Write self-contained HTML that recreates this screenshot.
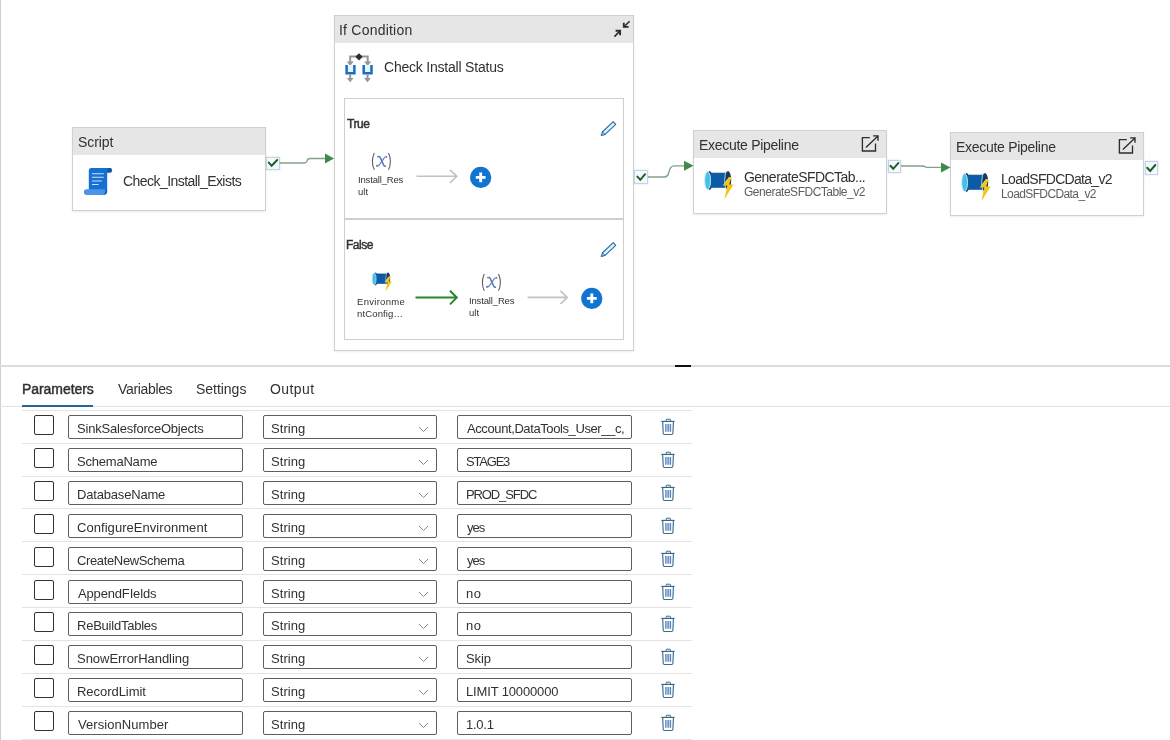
<!DOCTYPE html>
<html><head><meta charset="utf-8">
<style>
html,body{margin:0;padding:0;background:#fff;}
body{width:1170px;height:740px;position:relative;overflow:hidden;font-family:"Liberation Sans",sans-serif;color:#323130;}
.t{position:absolute;white-space:nowrap;will-change:transform;font-family:"Liberation Sans",sans-serif;}
.abs{position:absolute;}
.node{position:absolute;background:#fff;border:1px solid #d0d0d0;box-shadow:0 1px 2px rgba(0,0,0,0.08);box-sizing:border-box;}
.hdr{position:absolute;left:0;top:0;right:0;background:#e6e6e6;}
.chk{position:absolute;width:13.5px;height:13.5px;box-sizing:border-box;border:1px solid #c5d3e2;background:#f4f9fd;box-shadow:0 0 2px rgba(120,170,220,0.35);}
.sep{position:absolute;left:22px;width:670px;height:1px;background:#e3e3e3;}
.cb{position:absolute;left:34px;width:20px;height:20px;box-sizing:border-box;border:1px solid #323130;border-radius:2px;}
.inp{position:absolute;height:24px;box-sizing:border-box;border:1px solid #605e5c;border-radius:2px;}
.chev,.trash{position:absolute;}
svg{overflow:visible;}
</style></head><body>
<!-- left border -->
<div class="abs" style="left:0;top:0;width:1px;height:740px;background:#cfcfcf"></div>

<!-- Script node -->
<div class="node" style="left:72px;top:127px;width:194px;height:84px">
  <div class="hdr" style="height:27px"></div>
</div>
<svg class="abs" style="left:80px;top:163px" width="36" height="36" viewBox="0 0 36 36">
  <path d="M25.5 4.9 H30.3 Q32.1 4.9 32.1 7.3 Q32.1 9.7 30.3 9.7 H25.5 Z" fill="#0b5aa6"/>
  <path d="M11.3 4.9 H28.2 Q27.2 5.2 27.2 8 V28.6 Q27.2 31.6 24.4 31.6 H8.8 V7.6 Q8.8 4.9 11.3 4.9 Z" fill="#1570d2"/>
  <path d="M6.3 26.3 H26.2 V28.8 Q26.2 31.9 23.3 31.9 H6.3 Q3.9 31.9 3.9 29.1 Q3.9 26.3 6.3 26.3 Z" fill="#4b93e6"/>
  <path d="M23.5 31.9 Q26.5 31.9 27 28.6 V26.3 H25.2 V28.8 Q25.2 31 23 31.9 Z" fill="#0d5fb6"/>
  <path d="M11.9 10.7 H23.8 M11.9 14.3 H23.8 M11.9 18 H21.9 M11.9 21.4 H18.7" stroke="#c9e1fa" stroke-width="1.05"/>
</svg>
<div class="chk" style="left:266px;top:156.5px"></div>
<svg class="abs" style="left:0;top:0" width="1170" height="365">
  <!-- connectors -->
  <g fill="none" stroke="#84a088" stroke-width="1.3">
    <path d="M279.5 163 H304 Q306.5 163 307 161 Q307.5 158.5 310 158.5 H326"/>
    <path d="M647.8 177 H664 Q668 177 669 172 Q670 165.8 674.5 165.8 H685"/>
    <path d="M900 166 H922.5 Q924.5 166 925 166.8 Q925.5 167.3 927.5 167.3 H942"/>
  </g>
  <g fill="#3f8a4b">
    <path d="M325 153.6 L334 158.5 L325 163.6 Z"/>
    <path d="M684 160.8 L693.5 165.8 L684 170.8 Z"/>
    <path d="M941 162.4 L950.5 167.4 L941 172.4 Z"/>
  </g>
</svg>

<!-- If Condition node -->
<div class="node" style="left:334px;top:15px;width:300px;height:336px">
  <div class="hdr" style="height:26.5px"></div>
</div>
<svg class="abs" style="left:340px;top:50px" width="38" height="36" viewBox="0 0 38 36">
  <path d="M10.2 12.5 V6.4 H27.7 V12.5" fill="none" stroke="#959595" stroke-width="2"/>
  <path d="M6.6 11.6 L10.2 15.8 L13.8 11.6 Z M24.1 11.6 L27.7 15.8 L31.3 11.6 Z" fill="#959595"/>
  <path d="M19 3.2 L22.7 6.8 L19 10.5 L15.3 6.8 Z" fill="#2d2d2d"/>
  <rect x="6.8" y="15.5" width="7.4" height="7.5" fill="#e3f6fd"/>
  <rect x="24" y="15.5" width="7.4" height="7.5" fill="#e3f6fd"/>
  <path d="M6.6 15.1 V23.3 H14.4 V15.1" fill="none" stroke="#1a6dbf" stroke-width="2.5"/>
  <path d="M23.7 15.1 V23.3 H31.5 V15.1" fill="none" stroke="#1a6dbf" stroke-width="2.5"/>
  <path d="M10.2 24.5 V29 M27.5 24.5 V29" stroke="#959595" stroke-width="2"/>
  <path d="M6.8 28 L10.2 32.2 L13.6 28 Z M24.1 28 L27.5 32.2 L30.9 28 Z" fill="#959595"/>
</svg>
<!-- collapse icon -->
<svg class="abs" style="left:610px;top:17px" width="24" height="24" viewBox="0 0 24 24">
  <g fill="none" stroke="#2b2b2b" stroke-linecap="butt">
    <path d="M4.4 19.6 L10.1 13.9" stroke-width="1.5"/>
    <path d="M5.6 13.8 H10.1 V18.2" stroke-width="1.9"/>
    <path d="M19.6 4.3 L13.9 10" stroke-width="1.5"/>
    <path d="M13.8 5.7 V9.9 H18.6" stroke-width="1.9"/>
  </g>
</svg>
<!-- True/False boxes -->
<div class="abs" style="left:344px;top:98px;width:280px;height:121px;box-sizing:border-box;border:1px solid #cfcfcf;border-bottom:none"></div>
<div class="abs" style="left:344px;top:218px;width:280px;height:122px;box-sizing:border-box;border:1px solid #cfcfcf;border-top:2px solid #cfcfcf"></div>
<!-- pencils -->
<svg class="abs" style="left:596px;top:116px" width="24" height="24" viewBox="0 0 24 24"><path d="M17.26 5.69 L19.74 8.31 L9.04 18.41 L5.3 19.5 L6.56 15.79 Z" fill="#dff3fc" stroke="#2b6ca8" stroke-width="1.15" stroke-linejoin="round"/><path d="M6.6 15.8 L9 18.4" stroke="#2b6ca8" stroke-width="0.9"/></svg>
<svg class="abs" style="left:596px;top:237px" width="24" height="24" viewBox="0 0 24 24"><path d="M17.26 5.69 L19.74 8.31 L9.04 18.41 L5.3 19.5 L6.56 15.79 Z" fill="#dff3fc" stroke="#2b6ca8" stroke-width="1.15" stroke-linejoin="round"/><path d="M6.6 15.8 L9 18.4" stroke="#2b6ca8" stroke-width="0.9"/></svg>
<!-- (x) icons -->
<svg class="abs" style="left:366px;top:148px" width="30" height="26" viewBox="0 0 30 26"><path d="M8.3 5 Q4.4 13.4 8.3 21.8" fill="none" stroke="#5a5a5a" stroke-width="1.05"/><path d="M22.5 5 Q26.4 13.4 22.5 21.8" fill="none" stroke="#5a5a5a" stroke-width="1.05"/><path d="M11.2 8.9 Q13.2 7.7 14.3 9.6 L17.7 17.1 Q18.5 18.7 20 18" fill="none" stroke="#5b7cbd" stroke-width="1.55"/><path d="M21 8.7 Q19.6 8.1 18.2 9.9 L13.5 16.6 Q12.4 18.2 10.7 18.1" fill="none" stroke="#5b7cbd" stroke-width="1.05"/><circle cx="11" cy="17.7" r="0.95" fill="#5b7cbd"/><circle cx="20.5" cy="9" r="0.85" fill="#5b7cbd"/></svg>
<svg class="abs" style="left:476.2px;top:269.3px" width="30" height="26" viewBox="0 0 30 26"><path d="M8.3 5 Q4.4 13.4 8.3 21.8" fill="none" stroke="#5a5a5a" stroke-width="1.05"/><path d="M22.5 5 Q26.4 13.4 22.5 21.8" fill="none" stroke="#5a5a5a" stroke-width="1.05"/><path d="M11.2 8.9 Q13.2 7.7 14.3 9.6 L17.7 17.1 Q18.5 18.7 20 18" fill="none" stroke="#5b7cbd" stroke-width="1.55"/><path d="M21 8.7 Q19.6 8.1 18.2 9.9 L13.5 16.6 Q12.4 18.2 10.7 18.1" fill="none" stroke="#5b7cbd" stroke-width="1.05"/><circle cx="11" cy="17.7" r="0.95" fill="#5b7cbd"/><circle cx="20.5" cy="9" r="0.85" fill="#5b7cbd"/></svg>
<!-- arrows inside if -->
<svg class="abs" style="left:0;top:0" width="700" height="365">
  <g fill="none" stroke="#c2c2c2" stroke-width="1.6">
    <path d="M416.5 176.3 H457 M450 169.8 L456.8 176.3 L450 182.8"/>
    <path d="M527.5 297.4 H567.5 M560.5 290.9 L567.3 297.4 L560.5 303.9"/>
  </g>
  <g fill="none" stroke="#2a862a" stroke-width="2">
    <path d="M415.5 297.6 H457 M450 290.8 L456.8 297.6 L450 304.4"/>
  </g>
  <circle cx="480.7" cy="177.4" r="10.6" fill="#1174d0"/>
  <path d="M480.7 172.5 V182.3 M475.8 177.4 H485.6" stroke="#fff" stroke-width="2.9"/>
  <circle cx="591.8" cy="298.4" r="10.6" fill="#1174d0"/>
  <path d="M591.8 293.5 V303.3 M586.9 298.4 H596.7" stroke="#fff" stroke-width="2.9"/>
</svg>
<!-- small pipeline icon in False -->
<svg class="abs" style="left:368.7px;top:269.2px" width="27.2" height="24.5" viewBox="0 0 40 36"><ellipse cx="9.6" cy="14.5" rx="3" ry="9.4" fill="#173a63"/>
<path d="M9 7.2 H27 V21.8 H9 Z" fill="#0d5aa6"/>
<path d="M9 7.2 H27" stroke="#0a3f7a" stroke-width="0.8"/>
<ellipse cx="28" cy="14.3" rx="3.2" ry="9.3" fill="#183a62"/>
<path d="M25.7 5.1 Q23.6 14.3 25.7 23.4" fill="none" stroke="#a6e2f6" stroke-width="0.9"/>
<ellipse cx="7.6" cy="14.5" rx="2.9" ry="9" fill="#45bfe3" stroke="#c4effc" stroke-width="0.9"/>
<path d="M29.4 11 L22.6 19.6 H27.3 L24.3 33.6 L33.6 18.4 H29.2 L31.6 11 Z" fill="#f4c514"/>
<path d="M29.4 11 L24.5 17.5" stroke="#ffe47a" stroke-width="0.8"/></svg>

<!-- Execute Pipeline 1 -->
<div class="node" style="left:693px;top:130px;width:194px;height:84px">
  <div class="hdr" style="height:26.5px"></div>
</div>
<svg class="abs" style="left:700px;top:166px" width="40" height="36" viewBox="0 0 40 36"><ellipse cx="9.6" cy="14.5" rx="3" ry="9.4" fill="#173a63"/>
<path d="M9 7.2 H27 V21.8 H9 Z" fill="#0d5aa6"/>
<path d="M9 7.2 H27" stroke="#0a3f7a" stroke-width="0.8"/>
<ellipse cx="28" cy="14.3" rx="3.2" ry="9.3" fill="#183a62"/>
<path d="M25.7 5.1 Q23.6 14.3 25.7 23.4" fill="none" stroke="#a6e2f6" stroke-width="0.9"/>
<ellipse cx="7.6" cy="14.5" rx="2.9" ry="9" fill="#45bfe3" stroke="#c4effc" stroke-width="0.9"/>
<path d="M29.4 11 L22.6 19.6 H27.3 L24.3 33.6 L33.6 18.4 H29.2 L31.6 11 Z" fill="#f4c514"/>
<path d="M29.4 11 L24.5 17.5" stroke="#ffe47a" stroke-width="0.8"/></svg>
<svg class="abs" style="left:855px;top:130px" width="30" height="30" viewBox="0 0 30 30"><g fill="none" stroke="#2d2d2d" stroke-width="1.35"><path d="M14.8 7.6 H7.4 V21 H20.5 V13.6"/><path d="M10.9 17.6 L23 5.9 M18.1 5.9 H23 V10.8"/></g></svg>
<div class="chk" style="left:887.5px;top:159.5px"></div>

<!-- Execute Pipeline 2 -->
<div class="node" style="left:950px;top:132px;width:194px;height:84px">
  <div class="hdr" style="height:27px"></div>
</div>
<svg class="abs" style="left:957px;top:168px" width="40" height="36" viewBox="0 0 40 36"><ellipse cx="9.6" cy="14.5" rx="3" ry="9.4" fill="#173a63"/>
<path d="M9 7.2 H27 V21.8 H9 Z" fill="#0d5aa6"/>
<path d="M9 7.2 H27" stroke="#0a3f7a" stroke-width="0.8"/>
<ellipse cx="28" cy="14.3" rx="3.2" ry="9.3" fill="#183a62"/>
<path d="M25.7 5.1 Q23.6 14.3 25.7 23.4" fill="none" stroke="#a6e2f6" stroke-width="0.9"/>
<ellipse cx="7.6" cy="14.5" rx="2.9" ry="9" fill="#45bfe3" stroke="#c4effc" stroke-width="0.9"/>
<path d="M29.4 11 L22.6 19.6 H27.3 L24.3 33.6 L33.6 18.4 H29.2 L31.6 11 Z" fill="#f4c514"/>
<path d="M29.4 11 L24.5 17.5" stroke="#ffe47a" stroke-width="0.8"/></svg>
<svg class="abs" style="left:1112px;top:132px" width="30" height="30" viewBox="0 0 30 30"><g fill="none" stroke="#2d2d2d" stroke-width="1.35"><path d="M14.8 7.6 H7.4 V21 H20.5 V13.6"/><path d="M10.9 17.6 L23 5.9 M18.1 5.9 H23 V10.8"/></g></svg>
<div class="chk" style="left:1144.5px;top:161px"></div>
<div class="chk" style="left:634px;top:170.2px"></div>

<svg class="abs" style="left:0;top:0" width="1170" height="365">
  <!-- check marks -->
  <g fill="none" stroke="#1f5e27" stroke-width="2" stroke-linecap="round" stroke-linejoin="miter">
    <path d="M268.8 162.6 L271.6 165.8 L277.2 160"/>
    <path d="M637.4 176.6 L640.3 179.8 L645.1 174.2"/>
    <path d="M890.4 165.8 L893.2 168.8 L898.3 163.1"/>
    <path d="M1147.2 167.8 L1150.2 171 L1155.3 165"/>
  </g>
</svg>
<!-- bottom panel -->
<div class="abs" style="left:0;top:365px;width:1170px;height:2px;background:#dcdcdc"></div>
<div class="abs" style="left:675px;top:365px;width:16px;height:2px;background:#111"></div>
<div class="abs" style="left:0;top:406px;width:1170px;height:1px;background:#e1e1e1"></div>
<div class="abs" style="left:22px;top:405px;width:71px;height:2px;background:#25679b"></div>
<div class="abs" style="left:22px;top:410px;width:670px;height:1px;background:#e3e3e3"></div>
<div class='sep' style='top:443px'></div>
<div class='cb' style='top:415px'></div>
<div class='inp' style='left:68px;top:415px;width:175px'></div>
<div class='inp' style='left:263px;top:415px;width:174px'></div>
<svg class='chev' style='left:418px;top:426px' width='11' height='7' viewBox='0 0 11 7'><path d='M1 1 L5.5 5.5 L10 1' fill='none' stroke='#8a8886' stroke-width='1'/></svg>
<div class='inp' style='left:457px;top:415px;width:175px'></div>
<svg class='trash' style='left:656px;top:414px' width='24' height='26' viewBox='0 0 24 26'><path d='M10.2 6.9 V5.8 Q10.2 5.2 10.8 5.2 H13.9 Q14.5 5.2 14.5 5.8 V6.9' fill='#dff4fb' stroke='#2f5f80' stroke-width='0.9'/><path d='M5.3 7.4 H18.6' stroke='#2f5f80' stroke-width='1.1'/><path d='M6.7 7.9 L7.2 19.2 Q7.3 20.5 8.6 20.5 H15.5 Q16.8 20.5 16.9 19.2 L17.4 7.9' fill='none' stroke='#3d6b8c' stroke-width='1.15'/><rect x='9.3' y='10' width='5.8' height='7.7' fill='#b3d6f6'/><path d='M9.8 10 V17.7 M12.2 10 V17.7 M14.6 10 V17.7' stroke='#5673a6' stroke-width='0.95'/></svg>
<div class='sep' style='top:476px'></div>
<div class='cb' style='top:448px'></div>
<div class='inp' style='left:68px;top:448px;width:175px'></div>
<div class='inp' style='left:263px;top:448px;width:174px'></div>
<svg class='chev' style='left:418px;top:459px' width='11' height='7' viewBox='0 0 11 7'><path d='M1 1 L5.5 5.5 L10 1' fill='none' stroke='#8a8886' stroke-width='1'/></svg>
<div class='inp' style='left:457px;top:448px;width:175px'></div>
<svg class='trash' style='left:656px;top:447px' width='24' height='26' viewBox='0 0 24 26'><path d='M10.2 6.9 V5.8 Q10.2 5.2 10.8 5.2 H13.9 Q14.5 5.2 14.5 5.8 V6.9' fill='#dff4fb' stroke='#2f5f80' stroke-width='0.9'/><path d='M5.3 7.4 H18.6' stroke='#2f5f80' stroke-width='1.1'/><path d='M6.7 7.9 L7.2 19.2 Q7.3 20.5 8.6 20.5 H15.5 Q16.8 20.5 16.9 19.2 L17.4 7.9' fill='none' stroke='#3d6b8c' stroke-width='1.15'/><rect x='9.3' y='10' width='5.8' height='7.7' fill='#b3d6f6'/><path d='M9.8 10 V17.7 M12.2 10 V17.7 M14.6 10 V17.7' stroke='#5673a6' stroke-width='0.95'/></svg>
<div class='sep' style='top:508px'></div>
<div class='cb' style='top:481px'></div>
<div class='inp' style='left:68px;top:481px;width:175px'></div>
<div class='inp' style='left:263px;top:481px;width:174px'></div>
<svg class='chev' style='left:418px;top:492px' width='11' height='7' viewBox='0 0 11 7'><path d='M1 1 L5.5 5.5 L10 1' fill='none' stroke='#8a8886' stroke-width='1'/></svg>
<div class='inp' style='left:457px;top:481px;width:175px'></div>
<svg class='trash' style='left:656px;top:480px' width='24' height='26' viewBox='0 0 24 26'><path d='M10.2 6.9 V5.8 Q10.2 5.2 10.8 5.2 H13.9 Q14.5 5.2 14.5 5.8 V6.9' fill='#dff4fb' stroke='#2f5f80' stroke-width='0.9'/><path d='M5.3 7.4 H18.6' stroke='#2f5f80' stroke-width='1.1'/><path d='M6.7 7.9 L7.2 19.2 Q7.3 20.5 8.6 20.5 H15.5 Q16.8 20.5 16.9 19.2 L17.4 7.9' fill='none' stroke='#3d6b8c' stroke-width='1.15'/><rect x='9.3' y='10' width='5.8' height='7.7' fill='#b3d6f6'/><path d='M9.8 10 V17.7 M12.2 10 V17.7 M14.6 10 V17.7' stroke='#5673a6' stroke-width='0.95'/></svg>
<div class='sep' style='top:541px'></div>
<div class='cb' style='top:514px'></div>
<div class='inp' style='left:68px;top:514px;width:175px'></div>
<div class='inp' style='left:263px;top:514px;width:174px'></div>
<svg class='chev' style='left:418px;top:525px' width='11' height='7' viewBox='0 0 11 7'><path d='M1 1 L5.5 5.5 L10 1' fill='none' stroke='#8a8886' stroke-width='1'/></svg>
<div class='inp' style='left:457px;top:514px;width:175px'></div>
<svg class='trash' style='left:656px;top:513px' width='24' height='26' viewBox='0 0 24 26'><path d='M10.2 6.9 V5.8 Q10.2 5.2 10.8 5.2 H13.9 Q14.5 5.2 14.5 5.8 V6.9' fill='#dff4fb' stroke='#2f5f80' stroke-width='0.9'/><path d='M5.3 7.4 H18.6' stroke='#2f5f80' stroke-width='1.1'/><path d='M6.7 7.9 L7.2 19.2 Q7.3 20.5 8.6 20.5 H15.5 Q16.8 20.5 16.9 19.2 L17.4 7.9' fill='none' stroke='#3d6b8c' stroke-width='1.15'/><rect x='9.3' y='10' width='5.8' height='7.7' fill='#b3d6f6'/><path d='M9.8 10 V17.7 M12.2 10 V17.7 M14.6 10 V17.7' stroke='#5673a6' stroke-width='0.95'/></svg>
<div class='sep' style='top:574px'></div>
<div class='cb' style='top:547px'></div>
<div class='inp' style='left:68px;top:547px;width:175px'></div>
<div class='inp' style='left:263px;top:547px;width:174px'></div>
<svg class='chev' style='left:418px;top:558px' width='11' height='7' viewBox='0 0 11 7'><path d='M1 1 L5.5 5.5 L10 1' fill='none' stroke='#8a8886' stroke-width='1'/></svg>
<div class='inp' style='left:457px;top:547px;width:175px'></div>
<svg class='trash' style='left:656px;top:546px' width='24' height='26' viewBox='0 0 24 26'><path d='M10.2 6.9 V5.8 Q10.2 5.2 10.8 5.2 H13.9 Q14.5 5.2 14.5 5.8 V6.9' fill='#dff4fb' stroke='#2f5f80' stroke-width='0.9'/><path d='M5.3 7.4 H18.6' stroke='#2f5f80' stroke-width='1.1'/><path d='M6.7 7.9 L7.2 19.2 Q7.3 20.5 8.6 20.5 H15.5 Q16.8 20.5 16.9 19.2 L17.4 7.9' fill='none' stroke='#3d6b8c' stroke-width='1.15'/><rect x='9.3' y='10' width='5.8' height='7.7' fill='#b3d6f6'/><path d='M9.8 10 V17.7 M12.2 10 V17.7 M14.6 10 V17.7' stroke='#5673a6' stroke-width='0.95'/></svg>
<div class='sep' style='top:607px'></div>
<div class='cb' style='top:580px'></div>
<div class='inp' style='left:68px;top:580px;width:175px'></div>
<div class='inp' style='left:263px;top:580px;width:174px'></div>
<svg class='chev' style='left:418px;top:591px' width='11' height='7' viewBox='0 0 11 7'><path d='M1 1 L5.5 5.5 L10 1' fill='none' stroke='#8a8886' stroke-width='1'/></svg>
<div class='inp' style='left:457px;top:580px;width:175px'></div>
<svg class='trash' style='left:656px;top:579px' width='24' height='26' viewBox='0 0 24 26'><path d='M10.2 6.9 V5.8 Q10.2 5.2 10.8 5.2 H13.9 Q14.5 5.2 14.5 5.8 V6.9' fill='#dff4fb' stroke='#2f5f80' stroke-width='0.9'/><path d='M5.3 7.4 H18.6' stroke='#2f5f80' stroke-width='1.1'/><path d='M6.7 7.9 L7.2 19.2 Q7.3 20.5 8.6 20.5 H15.5 Q16.8 20.5 16.9 19.2 L17.4 7.9' fill='none' stroke='#3d6b8c' stroke-width='1.15'/><rect x='9.3' y='10' width='5.8' height='7.7' fill='#b3d6f6'/><path d='M9.8 10 V17.7 M12.2 10 V17.7 M14.6 10 V17.7' stroke='#5673a6' stroke-width='0.95'/></svg>
<div class='sep' style='top:640px'></div>
<div class='cb' style='top:612px'></div>
<div class='inp' style='left:68px;top:612px;width:175px'></div>
<div class='inp' style='left:263px;top:612px;width:174px'></div>
<svg class='chev' style='left:418px;top:623px' width='11' height='7' viewBox='0 0 11 7'><path d='M1 1 L5.5 5.5 L10 1' fill='none' stroke='#8a8886' stroke-width='1'/></svg>
<div class='inp' style='left:457px;top:612px;width:175px'></div>
<svg class='trash' style='left:656px;top:611px' width='24' height='26' viewBox='0 0 24 26'><path d='M10.2 6.9 V5.8 Q10.2 5.2 10.8 5.2 H13.9 Q14.5 5.2 14.5 5.8 V6.9' fill='#dff4fb' stroke='#2f5f80' stroke-width='0.9'/><path d='M5.3 7.4 H18.6' stroke='#2f5f80' stroke-width='1.1'/><path d='M6.7 7.9 L7.2 19.2 Q7.3 20.5 8.6 20.5 H15.5 Q16.8 20.5 16.9 19.2 L17.4 7.9' fill='none' stroke='#3d6b8c' stroke-width='1.15'/><rect x='9.3' y='10' width='5.8' height='7.7' fill='#b3d6f6'/><path d='M9.8 10 V17.7 M12.2 10 V17.7 M14.6 10 V17.7' stroke='#5673a6' stroke-width='0.95'/></svg>
<div class='sep' style='top:673px'></div>
<div class='cb' style='top:645px'></div>
<div class='inp' style='left:68px;top:645px;width:175px'></div>
<div class='inp' style='left:263px;top:645px;width:174px'></div>
<svg class='chev' style='left:418px;top:656px' width='11' height='7' viewBox='0 0 11 7'><path d='M1 1 L5.5 5.5 L10 1' fill='none' stroke='#8a8886' stroke-width='1'/></svg>
<div class='inp' style='left:457px;top:645px;width:175px'></div>
<svg class='trash' style='left:656px;top:644px' width='24' height='26' viewBox='0 0 24 26'><path d='M10.2 6.9 V5.8 Q10.2 5.2 10.8 5.2 H13.9 Q14.5 5.2 14.5 5.8 V6.9' fill='#dff4fb' stroke='#2f5f80' stroke-width='0.9'/><path d='M5.3 7.4 H18.6' stroke='#2f5f80' stroke-width='1.1'/><path d='M6.7 7.9 L7.2 19.2 Q7.3 20.5 8.6 20.5 H15.5 Q16.8 20.5 16.9 19.2 L17.4 7.9' fill='none' stroke='#3d6b8c' stroke-width='1.15'/><rect x='9.3' y='10' width='5.8' height='7.7' fill='#b3d6f6'/><path d='M9.8 10 V17.7 M12.2 10 V17.7 M14.6 10 V17.7' stroke='#5673a6' stroke-width='0.95'/></svg>
<div class='sep' style='top:706px'></div>
<div class='cb' style='top:678px'></div>
<div class='inp' style='left:68px;top:678px;width:175px'></div>
<div class='inp' style='left:263px;top:678px;width:174px'></div>
<svg class='chev' style='left:418px;top:689px' width='11' height='7' viewBox='0 0 11 7'><path d='M1 1 L5.5 5.5 L10 1' fill='none' stroke='#8a8886' stroke-width='1'/></svg>
<div class='inp' style='left:457px;top:678px;width:175px'></div>
<svg class='trash' style='left:656px;top:677px' width='24' height='26' viewBox='0 0 24 26'><path d='M10.2 6.9 V5.8 Q10.2 5.2 10.8 5.2 H13.9 Q14.5 5.2 14.5 5.8 V6.9' fill='#dff4fb' stroke='#2f5f80' stroke-width='0.9'/><path d='M5.3 7.4 H18.6' stroke='#2f5f80' stroke-width='1.1'/><path d='M6.7 7.9 L7.2 19.2 Q7.3 20.5 8.6 20.5 H15.5 Q16.8 20.5 16.9 19.2 L17.4 7.9' fill='none' stroke='#3d6b8c' stroke-width='1.15'/><rect x='9.3' y='10' width='5.8' height='7.7' fill='#b3d6f6'/><path d='M9.8 10 V17.7 M12.2 10 V17.7 M14.6 10 V17.7' stroke='#5673a6' stroke-width='0.95'/></svg>
<div class='sep' style='top:739px'></div>
<div class='cb' style='top:711px'></div>
<div class='inp' style='left:68px;top:711px;width:175px'></div>
<div class='inp' style='left:263px;top:711px;width:174px'></div>
<svg class='chev' style='left:418px;top:722px' width='11' height='7' viewBox='0 0 11 7'><path d='M1 1 L5.5 5.5 L10 1' fill='none' stroke='#8a8886' stroke-width='1'/></svg>
<div class='inp' style='left:457px;top:711px;width:175px'></div>
<svg class='trash' style='left:656px;top:710px' width='24' height='26' viewBox='0 0 24 26'><path d='M10.2 6.9 V5.8 Q10.2 5.2 10.8 5.2 H13.9 Q14.5 5.2 14.5 5.8 V6.9' fill='#dff4fb' stroke='#2f5f80' stroke-width='0.9'/><path d='M5.3 7.4 H18.6' stroke='#2f5f80' stroke-width='1.1'/><path d='M6.7 7.9 L7.2 19.2 Q7.3 20.5 8.6 20.5 H15.5 Q16.8 20.5 16.9 19.2 L17.4 7.9' fill='none' stroke='#3d6b8c' stroke-width='1.15'/><rect x='9.3' y='10' width='5.8' height='7.7' fill='#b3d6f6'/><path d='M9.8 10 V17.7 M12.2 10 V17.7 M14.6 10 V17.7' stroke='#5673a6' stroke-width='0.95'/></svg>
<div class='t' style='left:77.6px;top:135.3px;font-size:14px;line-height:14px;font-weight:400;letter-spacing:-0.08px;color:#323130;'>Script</div>
<div class='t' style='left:122.6px;top:174.1px;font-size:14px;line-height:14px;font-weight:400;letter-spacing:-0.55px;color:#323130;'>Check_Install_Exists</div>
<div class='t' style='left:338.7px;top:22.7px;font-size:14px;line-height:14px;font-weight:400;letter-spacing:0.22px;color:#323130;'>If Condition</div>
<div class='t' style='left:383.6px;top:59.7px;font-size:14px;line-height:14px;font-weight:400;letter-spacing:-0.21px;color:#323130;'>Check Install Status</div>
<div class='t' style='left:346.8px;top:117.8px;font-size:12px;line-height:12px;font-weight:400;letter-spacing:-0.43px;color:#323130;-webkit-text-stroke:0.45px #323130;'>True</div>
<div class='t' style='left:346.0px;top:238.8px;font-size:12px;line-height:12px;font-weight:400;letter-spacing:-0.47px;color:#323130;-webkit-text-stroke:0.45px #323130;'>False</div>
<div class='t' style='left:358.4px;top:174.9px;font-size:9.5px;line-height:9.5px;font-weight:400;letter-spacing:-0.17px;color:#323130;'>Install_Res</div>
<div class='t' style='left:358.4px;top:186.7px;font-size:9.5px;line-height:9.5px;font-weight:400;letter-spacing:0.00px;color:#323130;'>ult</div>
<div class='t' style='left:356.9px;top:297.0px;font-size:9.5px;line-height:9.5px;font-weight:400;letter-spacing:0.29px;color:#323130;'>Environme</div>
<div class='t' style='left:356.9px;top:308.8px;font-size:9.5px;line-height:9.5px;font-weight:400;letter-spacing:0.14px;color:#323130;'>ntConfig…</div>
<div class='t' style='left:468.6px;top:296.1px;font-size:9.5px;line-height:9.5px;font-weight:400;letter-spacing:-0.15px;color:#323130;'>Install_Res</div>
<div class='t' style='left:468.6px;top:307.9px;font-size:9.5px;line-height:9.5px;font-weight:400;letter-spacing:0.00px;color:#323130;'>ult</div>
<div class='t' style='left:698.7px;top:138.1px;font-size:14px;line-height:14px;font-weight:400;letter-spacing:-0.29px;color:#323130;'>Execute Pipeline</div>
<div class='t' style='left:743.7px;top:170.1px;font-size:14px;line-height:14px;font-weight:400;letter-spacing:-0.53px;color:#323130;'>GenerateSFDCTab...</div>
<div class='t' style='left:743.7px;top:185.6px;font-size:12px;line-height:12px;font-weight:400;letter-spacing:-0.49px;color:#605e5c;'>GenerateSFDCTable_v2</div>
<div class='t' style='left:955.7px;top:139.6px;font-size:14px;line-height:14px;font-weight:400;letter-spacing:-0.29px;color:#323130;'>Execute Pipeline</div>
<div class='t' style='left:1000.9px;top:171.7px;font-size:14px;line-height:14px;font-weight:400;letter-spacing:-0.71px;color:#323130;'>LoadSFDCData_v2</div>
<div class='t' style='left:1000.9px;top:187.5px;font-size:12px;line-height:12px;font-weight:400;letter-spacing:-0.61px;color:#605e5c;'>LoadSFDCData_v2</div>
<div class='t' style='left:21.5px;top:382.3px;font-size:14px;line-height:14px;font-weight:400;letter-spacing:-0.06px;color:#323130;-webkit-text-stroke:0.45px #323130;'>Parameters</div>
<div class='t' style='left:117.7px;top:382.3px;font-size:14px;line-height:14px;font-weight:400;letter-spacing:-0.34px;color:#323130;'>Variables</div>
<div class='t' style='left:195.7px;top:382.3px;font-size:14px;line-height:14px;font-weight:400;letter-spacing:-0.03px;color:#323130;'>Settings</div>
<div class='t' style='left:269.5px;top:382.3px;font-size:14px;line-height:14px;font-weight:400;letter-spacing:0.42px;color:#323130;'>Output</div>
<div class='t' style='left:76.8px;top:421.6px;font-size:13px;line-height:13px;font-weight:400;letter-spacing:-0.20px;color:#323130;'>SinkSalesforceObjects</div>
<div class='t' style='left:271.3px;top:422.0px;font-size:13px;line-height:13px;font-weight:400;letter-spacing:0.06px;color:#323130;'>String</div>
<div class='t' style='left:467.0px;top:421.8px;font-size:13px;line-height:13px;font-weight:400;letter-spacing:-0.40px;color:#323130;'>Account,DataTools_User__c,</div>
<div class='t' style='left:76.8px;top:454.6px;font-size:13px;line-height:13px;font-weight:400;letter-spacing:-0.21px;color:#323130;'>SchemaName</div>
<div class='t' style='left:271.3px;top:455.0px;font-size:13px;line-height:13px;font-weight:400;letter-spacing:0.06px;color:#323130;'>String</div>
<div class='t' style='left:466.0px;top:454.8px;font-size:13px;line-height:13px;font-weight:400;letter-spacing:-1.20px;color:#323130;'>STAGE3</div>
<div class='t' style='left:76.8px;top:487.6px;font-size:13px;line-height:13px;font-weight:400;letter-spacing:-0.18px;color:#323130;'>DatabaseName</div>
<div class='t' style='left:271.3px;top:488.0px;font-size:13px;line-height:13px;font-weight:400;letter-spacing:0.06px;color:#323130;'>String</div>
<div class='t' style='left:466.0px;top:487.8px;font-size:13px;line-height:13px;font-weight:400;letter-spacing:-1.11px;color:#323130;'>PROD_SFDC</div>
<div class='t' style='left:76.8px;top:520.6px;font-size:13px;line-height:13px;font-weight:400;letter-spacing:0.05px;color:#323130;'>ConfigureEnvironment</div>
<div class='t' style='left:271.3px;top:521.0px;font-size:13px;line-height:13px;font-weight:400;letter-spacing:0.06px;color:#323130;'>String</div>
<div class='t' style='left:467.0px;top:520.8px;font-size:13px;line-height:13px;font-weight:400;letter-spacing:-0.95px;color:#323130;'>yes</div>
<div class='t' style='left:76.8px;top:553.6px;font-size:13px;line-height:13px;font-weight:400;letter-spacing:-0.36px;color:#323130;'>CreateNewSchema</div>
<div class='t' style='left:271.3px;top:554.0px;font-size:13px;line-height:13px;font-weight:400;letter-spacing:0.06px;color:#323130;'>String</div>
<div class='t' style='left:467.0px;top:553.8px;font-size:13px;line-height:13px;font-weight:400;letter-spacing:-0.95px;color:#323130;'>yes</div>
<div class='t' style='left:77.8px;top:586.6px;font-size:13px;line-height:13px;font-weight:400;letter-spacing:-0.16px;color:#323130;'>AppendFIelds</div>
<div class='t' style='left:271.3px;top:587.0px;font-size:13px;line-height:13px;font-weight:400;letter-spacing:0.06px;color:#323130;'>String</div>
<div class='t' style='left:466.0px;top:586.8px;font-size:13px;line-height:13px;font-weight:400;letter-spacing:0.45px;color:#323130;'>no</div>
<div class='t' style='left:76.8px;top:618.6px;font-size:13px;line-height:13px;font-weight:400;letter-spacing:-0.23px;color:#323130;'>ReBuildTables</div>
<div class='t' style='left:271.3px;top:619.0px;font-size:13px;line-height:13px;font-weight:400;letter-spacing:0.06px;color:#323130;'>String</div>
<div class='t' style='left:466.0px;top:618.8px;font-size:13px;line-height:13px;font-weight:400;letter-spacing:0.45px;color:#323130;'>no</div>
<div class='t' style='left:76.8px;top:651.6px;font-size:13px;line-height:13px;font-weight:400;letter-spacing:-0.03px;color:#323130;'>SnowErrorHandling</div>
<div class='t' style='left:271.3px;top:652.0px;font-size:13px;line-height:13px;font-weight:400;letter-spacing:0.06px;color:#323130;'>String</div>
<div class='t' style='left:466.0px;top:651.8px;font-size:13px;line-height:13px;font-weight:400;letter-spacing:-0.07px;color:#323130;'>Skip</div>
<div class='t' style='left:76.8px;top:684.6px;font-size:13px;line-height:13px;font-weight:400;letter-spacing:-0.04px;color:#323130;'>RecordLimit</div>
<div class='t' style='left:271.3px;top:685.0px;font-size:13px;line-height:13px;font-weight:400;letter-spacing:0.06px;color:#323130;'>String</div>
<div class='t' style='left:466.0px;top:684.8px;font-size:13px;line-height:13px;font-weight:400;letter-spacing:-0.15px;color:#323130;'>LIMIT 10000000</div>
<div class='t' style='left:77.8px;top:717.6px;font-size:13px;line-height:13px;font-weight:400;letter-spacing:0.06px;color:#323130;'>VersionNumber</div>
<div class='t' style='left:271.3px;top:718.0px;font-size:13px;line-height:13px;font-weight:400;letter-spacing:0.06px;color:#323130;'>String</div>
<div class='t' style='left:466.0px;top:717.8px;font-size:13px;line-height:13px;font-weight:400;letter-spacing:-0.25px;color:#323130;'>1.0.1</div>
</body></html>
